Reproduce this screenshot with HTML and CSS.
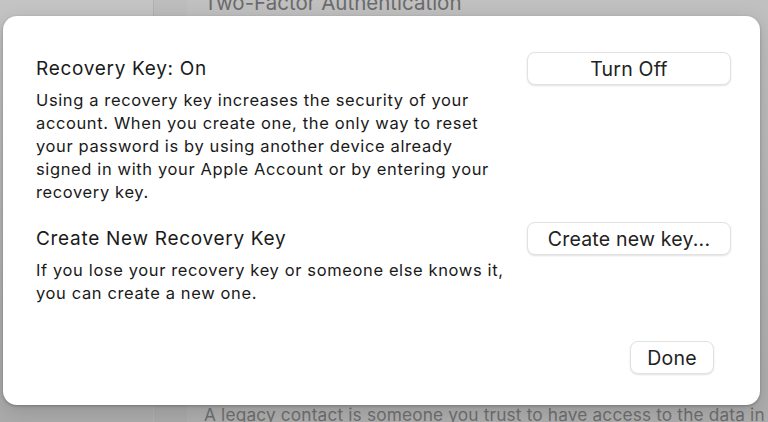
FILE: index.html
```html
<!DOCTYPE html>
<html>
<head>
    <title>Recovery Key</title>
    <link rel="stylesheet" href="styles.css">
</head>
<body>
    <div class="backdrop">
        <div class="sidebar"></div>
        <div class="gutter"></div>
        <div class="main">
            <p class="bg-title">Two-Factor Authentication</p>
            <p class="bg-text">A legacy contact is someone you trust to have access to the data in your account after your death.</p>
        </div>
    </div>

    <div class="sheet">
        <div class="row">
            <div class="info">
                <h3>Recovery Key: On</h3>
                <p>Using a recovery key increases the security of your<br>
                account. When you create one, the only way to reset<br>
                your password is by using another device already<br>
                signed in with your Apple Account or by entering your<br>
                recovery key.</p>
            </div>
            <button class="btn wide">Turn Off</button>
        </div>

        <div class="row">
            <div class="info">
                <h3>Create New Recovery Key</h3>
                <p>If you lose your recovery key or someone else knows it,<br>
                you can create a new one.</p>
            </div>
            <button class="btn wide">Create new key...</button>
        </div>

        <div class="footer">
            <button class="btn done">Done</button>
        </div>
    </div>
</body>
</html>
```

FILE: styles.css
```css
html, body {
    margin: 0;
    height: 100%;
    overflow: hidden;
}

body {
    font-family: Inter, "Noto Sans", sans-serif;
    background: #b6b6b6;
}

.backdrop {
    display: flex;
    height: 422px;
}

.sidebar {
    width: 153px;
    background: linear-gradient(#c4c4c4, #ababab);
}

.gutter {
    width: 33px;
    background: linear-gradient(#bdbdbd, #a9a9a9);
    border-left: 1px solid #b0b0b0;
}

.main {
    flex: 1;
    background: linear-gradient(#c0c0c0, #adadad);
    display: flex;
    flex-direction: column;
    justify-content: space-between;
    padding-left: 17px;
    white-space: nowrap;
    overflow: hidden;
}

.bg-title {
    margin: -10px 0 0;
    font-size: 20.5px;
    color: #6b6b6b;
}

.bg-text {
    margin: 0 0 -3px;
    font-size: 17.3px;
    letter-spacing: 0.15px;
    color: #6e6e6e;
}

.sheet {
    position: absolute;
    left: 3px;
    top: 16px;
    width: 757px;
    height: 389px;
    box-sizing: border-box;
    padding: 41px 29px 31px 33px;
    background: #fff;
    border-radius: 14px;
    box-shadow: 0 1px 3px rgba(0,0,0,0.25), 0 6px 20px rgba(0,0,0,0.15);
    display: flex;
    flex-direction: column;
    color: #1a1a1a;
}

.row {
    display: flex;
    justify-content: space-between;
    align-items: flex-start;
    margin-bottom: 23px;
}

.info {
    width: 480px;
    white-space: nowrap;
}

h3 {
    margin: 0;
    font-size: 19px;
    font-weight: 400;
    letter-spacing: 0.7px;
    line-height: 24px;
}

.info p {
    margin: 8px 0 0;
    font-size: 16.5px;
    letter-spacing: 0.62px;
    line-height: 23px;
}

.btn {
    font-family: inherit;
    font-size: 19.5px;
    letter-spacing: 0.2px;
    color: #222;
    background: #fff;
    border: 1px solid #e2e2e2;
    border-radius: 8px;
    box-shadow: 0 1px 2px rgba(0,0,0,0.12);
    height: 33px;
    padding: 0;
}

.wide {
    width: 204px;
    margin-top: -5px;
}

.footer {
    margin-top: auto;
    display: flex;
    justify-content: flex-end;
    padding-right: 17px;
}

.done {
    width: 84px;
}
```
